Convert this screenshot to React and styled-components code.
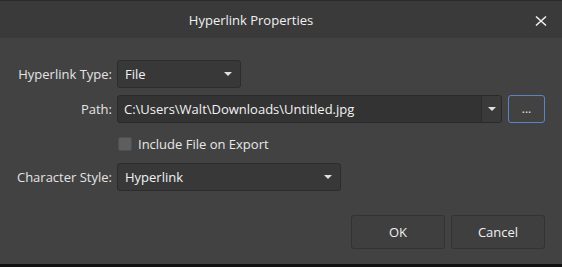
import styled, { createGlobalStyle } from 'styled-components';

const Global = createGlobalStyle`
    html, body {
        margin: 0;
        padding: 0;
        background: #1a1a1a;
    }
    * {
        box-sizing: border-box;
    }
`;

const Dialog = styled.div`
    width: 562px;
    height: 264px;
    display: flex;
    flex-direction: column;
    background: #424242;
    border-top: 1px solid #2a2a2a;
    font-family: 'Open Sans', 'Noto Sans', sans-serif;
    font-size: 13px;
    color: #e8e8e8;
`;

const TitleBar = styled.div`
    height: 37px;
    flex: none;
    display: flex;
    align-items: center;
    justify-content: center;
    padding-right: 60px;
    position: relative;
    background: #3a3a3a;
    font-size: 13px;
    color: #f0f0f0;
`;

const Close = styled.div`
    position: absolute;
    right: 15px;
    top: 14px;
    width: 12px;
    height: 12px;
    display: flex;
`;

const Body = styled.div`
    flex: 1;
    display: flex;
    flex-direction: column;
    padding: 22px 17px 0 0;
`;

const Row = styled.div`
    display: flex;
    align-items: center;
    gap: 5px;
    height: 28px;
    margin-bottom: ${(p) => p.$gap ?? 7}px;
`;

const Label = styled.div`
    width: 112px;
    flex: none;
    text-align: right;
    color: #e4e4e4;
`;

const Select = styled.div`
    width: ${(p) => p.$width}px;
    height: 28px;
    display: flex;
    align-items: center;
    justify-content: space-between;
    padding: 0 8px 0 7px;
    background: #383838;
    border: 1px solid #2c2c2c;
    border-radius: 3px;
    color: #f2f2f2;
`;

const Combo = styled.div`
    width: 386px;
    height: 28px;
    display: flex;
    background: #333333;
    border: 1px solid #2a2a2a;
    border-radius: 3px;
    overflow: hidden;
`;

const ComboText = styled.div`
    flex: 1;
    display: flex;
    align-items: center;
    padding-left: 6px;
    color: #f2f2f2;
`;

const ComboArrow = styled.div`
    width: 20px;
    display: flex;
    align-items: center;
    justify-content: center;
    background: #3a3a3a;
    border-left: 1px solid #2a2a2a;
`;

const Arrow = styled.span`
    width: 0;
    height: 0;
    border-left: 4px solid transparent;
    border-right: 4px solid transparent;
    border-top: 4px solid #e0e0e0;
`;

const BrowseButton = styled.div`
    width: 37px;
    height: 28px;
    margin-left: 1px;
    display: flex;
    align-items: flex-end;
    justify-content: center;
    padding-bottom: 7px;
    border: 1px solid #5b84c4;
    border-radius: 3px;
    background: #424242;
    line-height: 1;
    font-size: 12px;
    color: #e8e8e8;
`;

const CheckRow = styled.label`
    display: flex;
    align-items: center;
    gap: 6px;
    height: 16px;
    margin: 13px 0 11px 118px;
`;

const Box = styled.span`
    width: 14px;
    height: 14px;
    border-radius: 2px;
    background: #5e5e5e;
    border: 1px solid #4e4e4e;
`;

const Footer = styled.div`
    display: flex;
    justify-content: flex-end;
    gap: 6px;
    margin-top: 24px;
`;

const Button = styled.div`
    width: 94px;
    height: 34px;
    display: flex;
    align-items: center;
    justify-content: center;
    background: #3f3f3f;
    border: 1px solid #333333;
    border-radius: 3px;
    color: #f0f0f0;
`;

const BottomEdge = styled.div`
    height: 3px;
    background: #111111;
`;

const CloseIcon = () => (
    <svg width="12" height="12" viewBox="0 0 12 12">
        <path d="M1 1.5 L11 10.5 M11 1.5 L1 10.5" stroke="#f0f0f0" strokeWidth="1.6" />
    </svg>
);

export default function App() {
    return (
        <>
            <Global />
            <Dialog>
                <TitleBar>
                    Hyperlink Properties
                    <Close>
                        <CloseIcon />
                    </Close>
                </TitleBar>
                <Body>
                    <Row>
                        <Label>Hyperlink Type:</Label>
                        <Select $width={124}>
                            File
                            <Arrow />
                        </Select>
                    </Row>
                    <Row $gap={0}>
                        <Label>Path:</Label>
                        <Combo>
                            <ComboText>C:\Users\Walt\Downloads\Untitled.jpg</ComboText>
                            <ComboArrow>
                                <Arrow />
                            </ComboArrow>
                        </Combo>
                        <BrowseButton>...</BrowseButton>
                    </Row>
                    <CheckRow>
                        <Box />
                        Include File on Export
                    </CheckRow>
                    <Row $gap={0}>
                        <Label>Character Style:</Label>
                        <Select $width={224}>
                            Hyperlink
                            <Arrow />
                        </Select>
                    </Row>
                    <Footer>
                        <Button>OK</Button>
                        <Button>Cancel</Button>
                    </Footer>
                </Body>
            </Dialog>
            <BottomEdge />
        </>
    );
}
